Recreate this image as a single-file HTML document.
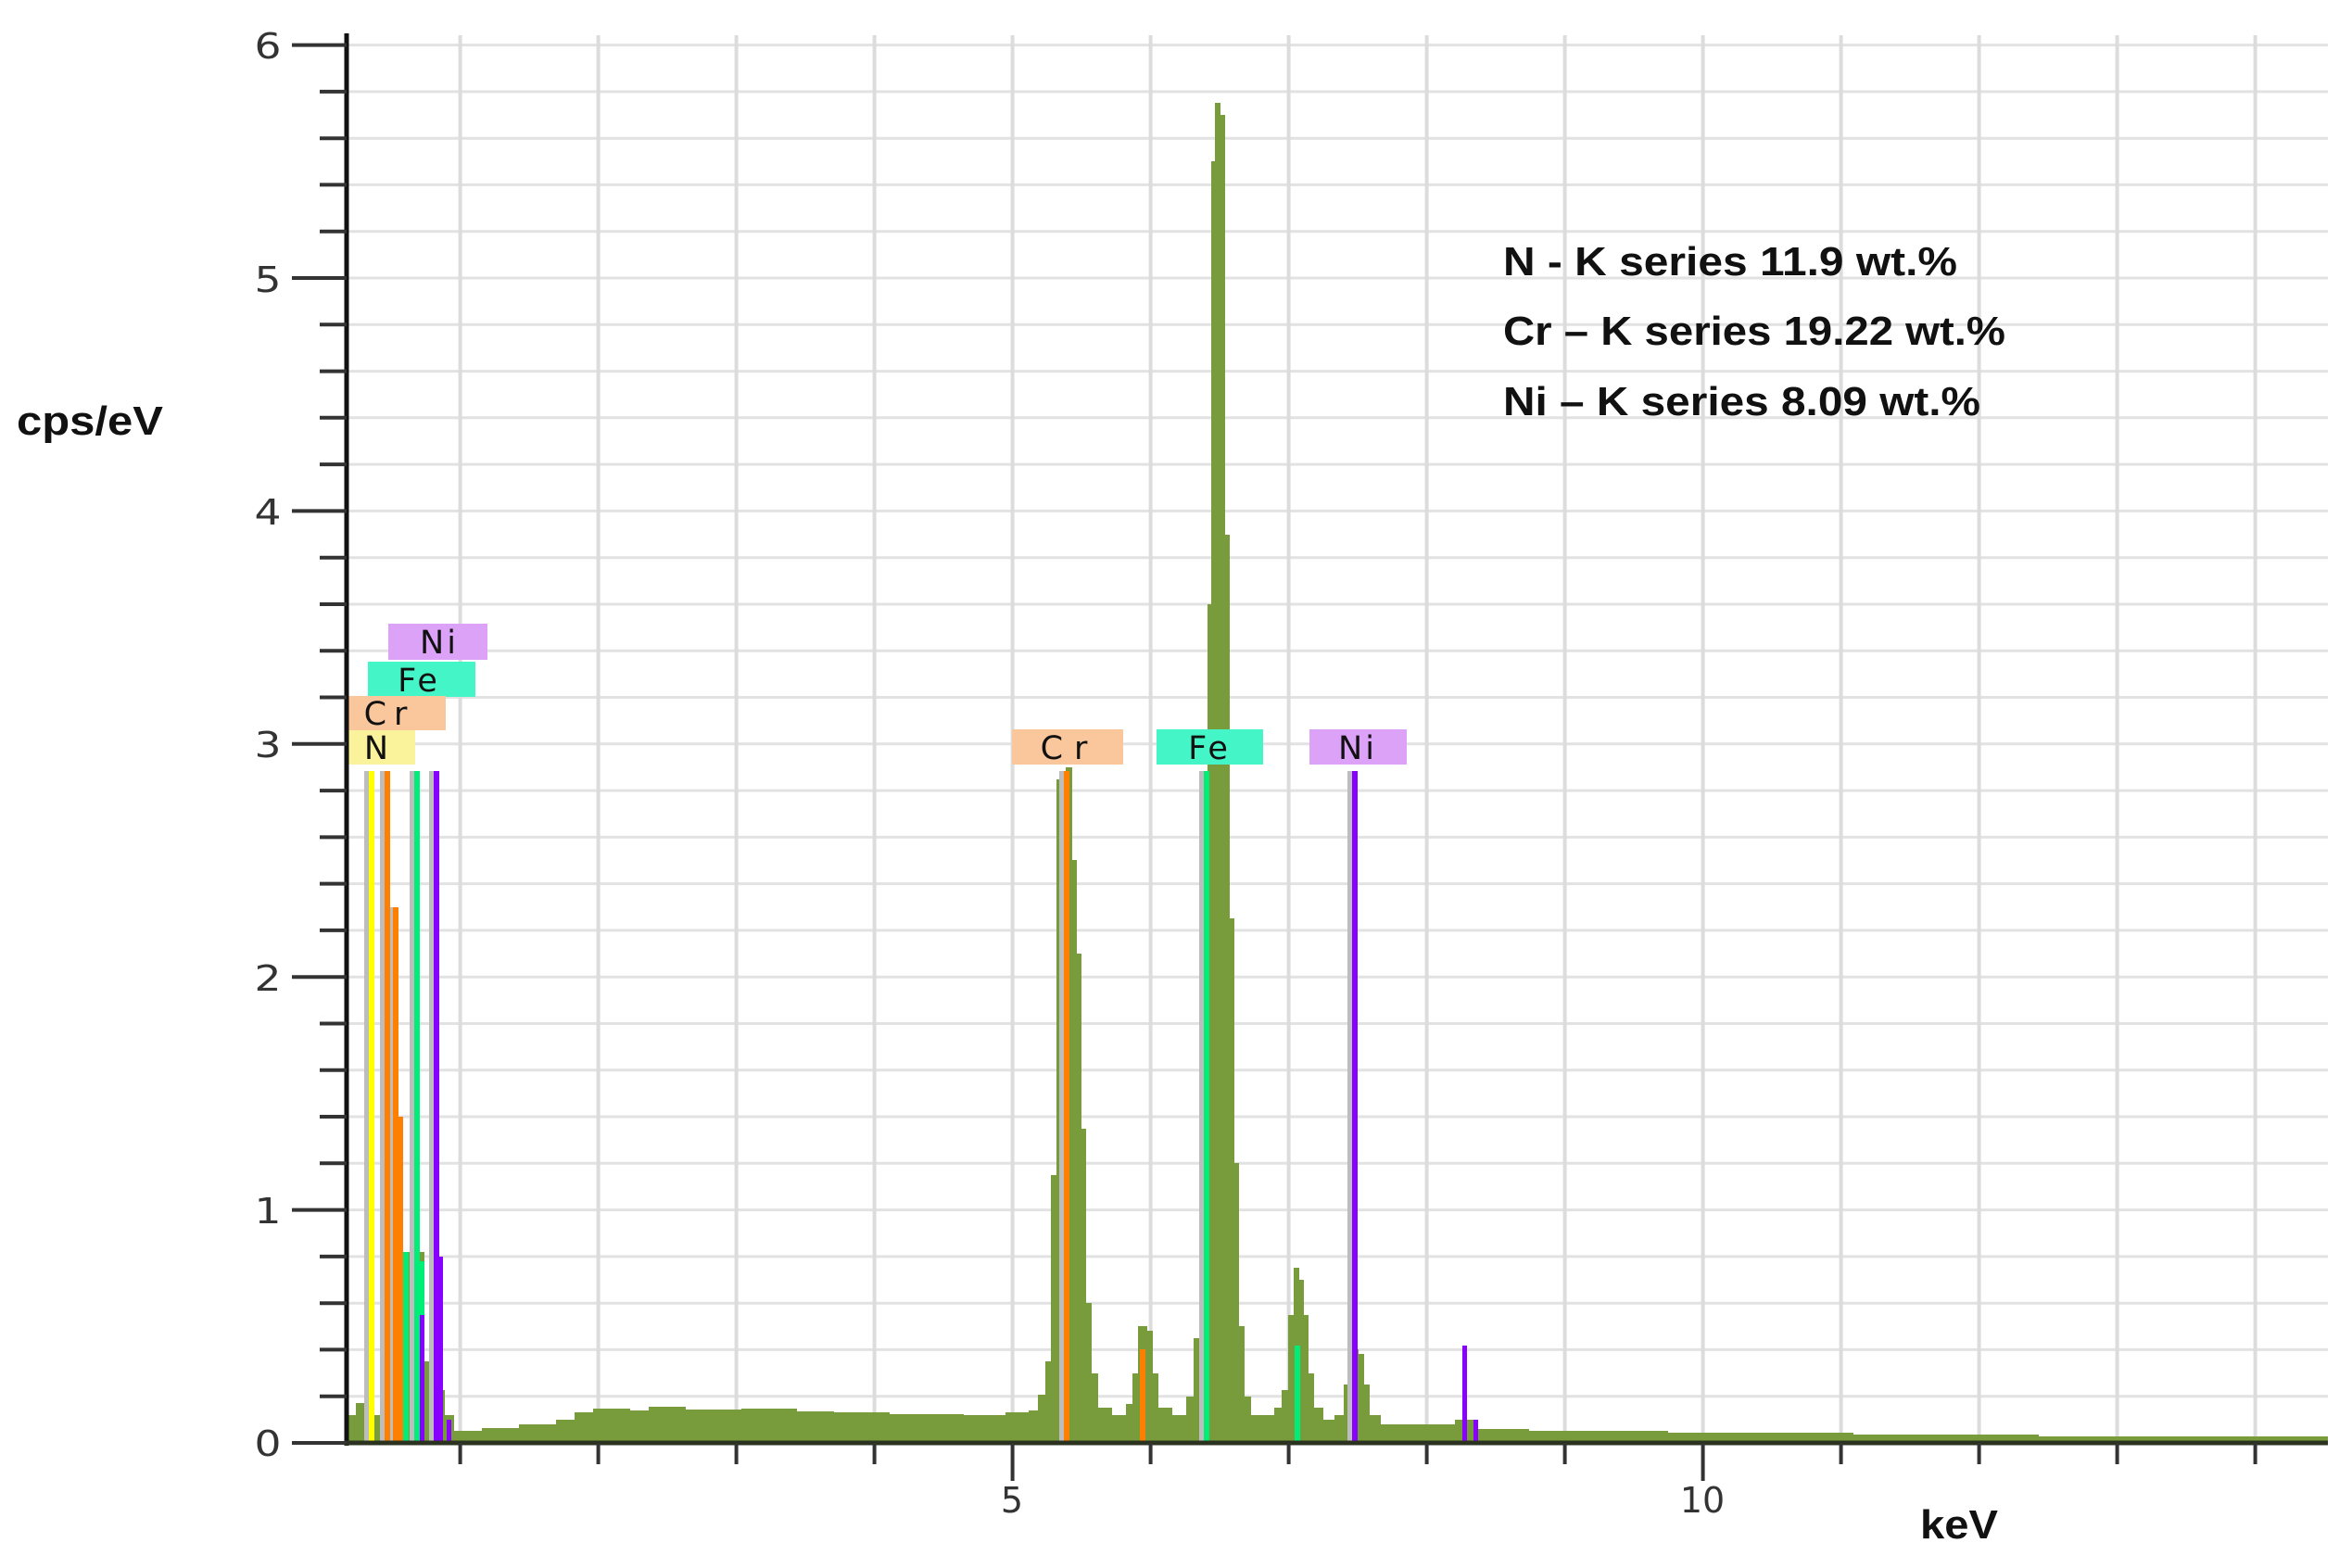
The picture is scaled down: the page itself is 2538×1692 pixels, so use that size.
<!DOCTYPE html>
<html><head><meta charset="utf-8"><style>
html,body{margin:0;padding:0;background:#fff;}
svg{display:block;}
</style></head><body>
<svg width="2538" height="1692" viewBox="0 0 2538 1692" xmlns="http://www.w3.org/2000/svg">
<rect width="2538" height="1692" fill="#fff"/>
<g stroke="#e2e2e2" stroke-width="3">
<line x1="376" x2="2512" y1="1506.7" y2="1506.7"/><line x1="376" x2="2512" y1="1456.4" y2="1456.4"/><line x1="376" x2="2512" y1="1406.2" y2="1406.2"/><line x1="376" x2="2512" y1="1355.9" y2="1355.9"/><line x1="376" x2="2512" y1="1305.6" y2="1305.6"/><line x1="376" x2="2512" y1="1255.3" y2="1255.3"/><line x1="376" x2="2512" y1="1205" y2="1205"/><line x1="376" x2="2512" y1="1154.8" y2="1154.8"/><line x1="376" x2="2512" y1="1104.5" y2="1104.5"/><line x1="376" x2="2512" y1="1054.2" y2="1054.2"/><line x1="376" x2="2512" y1="1003.9" y2="1003.9"/><line x1="376" x2="2512" y1="953.6" y2="953.6"/><line x1="376" x2="2512" y1="903.4" y2="903.4"/><line x1="376" x2="2512" y1="853.1" y2="853.1"/><line x1="376" x2="2512" y1="802.8" y2="802.8"/><line x1="376" x2="2512" y1="752.5" y2="752.5"/><line x1="376" x2="2512" y1="702.2" y2="702.2"/><line x1="376" x2="2512" y1="652" y2="652"/><line x1="376" x2="2512" y1="601.7" y2="601.7"/><line x1="376" x2="2512" y1="551.4" y2="551.4"/><line x1="376" x2="2512" y1="501.1" y2="501.1"/><line x1="376" x2="2512" y1="450.8" y2="450.8"/><line x1="376" x2="2512" y1="400.6" y2="400.6"/><line x1="376" x2="2512" y1="350.3" y2="350.3"/><line x1="376" x2="2512" y1="300" y2="300"/><line x1="376" x2="2512" y1="249.7" y2="249.7"/><line x1="376" x2="2512" y1="199.4" y2="199.4"/><line x1="376" x2="2512" y1="149.2" y2="149.2"/><line x1="376" x2="2512" y1="98.9" y2="98.9"/><line x1="376" x2="2512" y1="48.6" y2="48.6"/>
</g>
<g stroke="#dcdcdc" stroke-width="4">
<line y1="38" y2="1557" x1="496.6" x2="496.6"/><line y1="38" y2="1557" x1="645.6" x2="645.6"/><line y1="38" y2="1557" x1="794.6" x2="794.6"/><line y1="38" y2="1557" x1="943.6" x2="943.6"/><line y1="38" y2="1557" x1="1092.6" x2="1092.6"/><line y1="38" y2="1557" x1="1241.6" x2="1241.6"/><line y1="38" y2="1557" x1="1390.6" x2="1390.6"/><line y1="38" y2="1557" x1="1539.6" x2="1539.6"/><line y1="38" y2="1557" x1="1688.6" x2="1688.6"/><line y1="38" y2="1557" x1="1837.6" x2="1837.6"/><line y1="38" y2="1557" x1="1986.6" x2="1986.6"/><line y1="38" y2="1557" x1="2135.6" x2="2135.6"/><line y1="38" y2="1557" x1="2284.6" x2="2284.6"/><line y1="38" y2="1557" x1="2433.6" x2="2433.6"/>
</g>
<path fill="#789b3b" d="M376,1557 V1527 H384 V1514 H395 V1522 H404 V1527 H415 V1507 H425 V1527 H440 V1351 H458 V1469 H465 V1500 H480 V1527 H490 V1544 H520 V1541 H560 V1537 H600 V1532 H620 V1524 H640 V1520 H680 V1522 H700 V1518 H740 V1521 H800 V1520 H860 V1523 H900 V1524 H960 V1526 H1040 V1527 H1085 V1524 H1110 V1522 H1120 V1505 H1128 V1469 H1134 V1268 H1140 V841 H1150 V828 H1157 V928 H1162 V1029 H1167 V1218 H1172 V1406 H1178 V1482 H1185 V1519 H1200 V1527 H1215 V1515 H1222 V1482 H1228 V1431 H1238 V1436 H1244 V1482 H1250 V1519 H1265 V1527 H1280 V1507 H1288 V1444 H1294 V1306 H1299 V1079 H1303 V652 H1307 V174 H1311 V111 H1317 V124 H1322 V577 H1327 V991 H1332 V1255 H1337 V1431 H1343 V1507 H1350 V1527 H1375 V1519 H1383 V1500 H1390 V1419 H1396 V1368 H1402 V1381 H1407 V1419 H1412 V1482 H1418 V1519 H1428 V1532 H1440 V1527 H1450 V1494 H1458 V1456 H1466 V1461 H1472 V1494 H1478 V1527 H1490 V1537 H1540 V1537 H1570 V1532 H1595 V1542 H1650 V1544 H1800 V1546 H2000 V1548 H2200 V1550 H2512 V1557 Z"/>
<g>
<rect x="393" y="832" width="5" height="725" fill="#bdbdbd"/>
<rect x="398" y="832" width="6" height="725" fill="#ffff00"/>
<rect x="410" y="832" width="5" height="725" fill="#bdbdbd"/>
<rect x="415" y="832" width="6" height="725" fill="#ff7f00"/>
<rect x="421" y="979" width="4" height="578" fill="#bdbdbd"/>
<rect x="424" y="979" width="6" height="578" fill="#ff7f00"/>
<rect x="430" y="1205" width="5" height="352" fill="#ff7f00"/>
<rect x="435" y="1351" width="6" height="206" fill="#00ee77"/>
<rect x="442" y="832" width="5" height="725" fill="#bdbdbd"/>
<rect x="447" y="832" width="6" height="725" fill="#00ee77"/>
<rect x="453" y="1361" width="5" height="196" fill="#00ee77"/>
<rect x="453" y="1419" width="5" height="138" fill="#8800ff"/>
<rect x="463" y="832" width="5" height="725" fill="#bdbdbd"/>
<rect x="468" y="832" width="6" height="725" fill="#8800ff"/>
<rect x="474" y="1356" width="4" height="201" fill="#8800ff"/>
<rect x="482" y="1532" width="5" height="25" fill="#8800ff"/>
</g>
<g>
<rect x="1143" y="832" width="5" height="725" fill="#bdbdbd"/>
<rect x="1148" y="832" width="6" height="725" fill="#ff7f00"/>
<rect x="1230" y="1456" width="6" height="101" fill="#ff7f00"/>
<rect x="1294" y="832" width="5" height="725" fill="#bdbdbd"/>
<rect x="1299" y="832" width="6" height="725" fill="#00ee77"/>
<rect x="1397" y="1452" width="6" height="105" fill="#00ee77"/>
<rect x="1454" y="832" width="5" height="725" fill="#bdbdbd"/>
<rect x="1459" y="832" width="6" height="725" fill="#8800ff"/>
<rect x="1578" y="1452" width="5" height="105" fill="#8800ff"/>
<rect x="1590" y="1532" width="5" height="25" fill="#8800ff"/>
</g>
<g font-family="DejaVu Sans, sans-serif" font-size="35" fill="#111" text-anchor="middle">
<rect x="419" y="673" width="107" height="39" fill="#dca2f7"/>
<text x="474" y="705" letter-spacing="3">Ni</text>
<rect x="397" y="714" width="116" height="38" fill="#44f5c8"/>
<text x="452" y="746" letter-spacing="3">Fe</text>
<rect x="374" y="751" width="107" height="37" fill="#fac79c"/>
<text x="420" y="782" letter-spacing="8">Cr</text>
<rect x="374" y="788" width="74" height="37" fill="#fbf39c"/>
<text x="406" y="819">N</text>
<rect x="1092" y="787" width="120" height="38" fill="#fac79c"/>
<text x="1154" y="819" letter-spacing="12">Cr</text>
<rect x="1248" y="787" width="115" height="38" fill="#44f5c8"/>
<text x="1305" y="819" letter-spacing="3">Fe</text>
<rect x="1413" y="787" width="105" height="38" fill="#dca2f7"/>
<text x="1465" y="819" letter-spacing="3">Ni</text>
</g>
<line x1="374" y1="36" x2="374" y2="1560" stroke="#111" stroke-width="5"/>
<line x1="372" y1="1557" x2="2512" y2="1557" stroke="#2b3320" stroke-width="5"/>
<g stroke="#333" stroke-width="4">
<line x1="315" x2="374" y1="48.6" y2="48.6"/><line x1="315" x2="374" y1="300" y2="300"/><line x1="315" x2="374" y1="551.4" y2="551.4"/><line x1="315" x2="374" y1="802.8" y2="802.8"/><line x1="315" x2="374" y1="1054.2" y2="1054.2"/><line x1="315" x2="374" y1="1305.6" y2="1305.6"/><line x1="315" x2="374" y1="1557" y2="1557"/>
<line x1="345" x2="374" y1="98.9" y2="98.9"/><line x1="345" x2="374" y1="149.2" y2="149.2"/><line x1="345" x2="374" y1="199.4" y2="199.4"/><line x1="345" x2="374" y1="249.7" y2="249.7"/>
<line x1="345" x2="374" y1="350.3" y2="350.3"/><line x1="345" x2="374" y1="400.6" y2="400.6"/><line x1="345" x2="374" y1="450.8" y2="450.8"/><line x1="345" x2="374" y1="501.1" y2="501.1"/>
<line x1="345" x2="374" y1="601.7" y2="601.7"/><line x1="345" x2="374" y1="652" y2="652"/><line x1="345" x2="374" y1="702.2" y2="702.2"/><line x1="345" x2="374" y1="752.5" y2="752.5"/>
<line x1="345" x2="374" y1="853.1" y2="853.1"/><line x1="345" x2="374" y1="903.4" y2="903.4"/><line x1="345" x2="374" y1="953.6" y2="953.6"/><line x1="345" x2="374" y1="1003.9" y2="1003.9"/>
<line x1="345" x2="374" y1="1104.5" y2="1104.5"/><line x1="345" x2="374" y1="1154.8" y2="1154.8"/><line x1="345" x2="374" y1="1205" y2="1205"/><line x1="345" x2="374" y1="1255.3" y2="1255.3"/>
<line x1="345" x2="374" y1="1355.9" y2="1355.9"/><line x1="345" x2="374" y1="1406.2" y2="1406.2"/><line x1="345" x2="374" y1="1456.4" y2="1456.4"/><line x1="345" x2="374" y1="1506.7" y2="1506.7"/>
<line y1="1557" y2="1580" x1="496.6" x2="496.6"/><line y1="1557" y2="1580" x1="645.6" x2="645.6"/><line y1="1557" y2="1580" x1="794.6" x2="794.6"/><line y1="1557" y2="1580" x1="943.6" x2="943.6"/><line y1="1557" y2="1598" x1="1092.6" x2="1092.6"/><line y1="1557" y2="1580" x1="1241.6" x2="1241.6"/><line y1="1557" y2="1580" x1="1390.6" x2="1390.6"/><line y1="1557" y2="1580" x1="1539.6" x2="1539.6"/><line y1="1557" y2="1580" x1="1688.6" x2="1688.6"/><line y1="1557" y2="1598" x1="1837.6" x2="1837.6"/><line y1="1557" y2="1580" x1="1986.6" x2="1986.6"/><line y1="1557" y2="1580" x1="2135.6" x2="2135.6"/><line y1="1557" y2="1580" x1="2284.6" x2="2284.6"/><line y1="1557" y2="1580" x1="2433.6" x2="2433.6"/>
</g>
<g font-family="DejaVu Sans, sans-serif" font-size="38" fill="#333" text-anchor="middle">
<g transform="translate(289,0) scale(1.2,1)">
<text x="0" y="63">6</text><text x="0" y="315">5</text><text x="0" y="566">4</text><text x="0" y="817">3</text><text x="0" y="1069">2</text><text x="0" y="1320">1</text><text x="0" y="1571">0</text>
</g>
<text x="1092" y="1632">5</text><text x="1837" y="1632">10</text>
</g>
<g font-family="Liberation Sans, sans-serif" font-weight="bold" fill="#111">
<text x="18" y="469" font-size="44" textLength="158" lengthAdjust="spacingAndGlyphs">cps/eV</text>
<text x="2072" y="1660" font-size="44" textLength="84" lengthAdjust="spacingAndGlyphs">keV</text>
<text x="1622" y="297" font-size="44" textLength="490" lengthAdjust="spacingAndGlyphs">N - K  series 11.9 wt.%</text>
<text x="1622" y="372" font-size="44" textLength="542" lengthAdjust="spacingAndGlyphs">Cr – K series 19.22 wt.%</text>
<text x="1622" y="448" font-size="44" textLength="515" lengthAdjust="spacingAndGlyphs">Ni – K series 8.09 wt.%</text>
</g>
</svg>
</body></html>
